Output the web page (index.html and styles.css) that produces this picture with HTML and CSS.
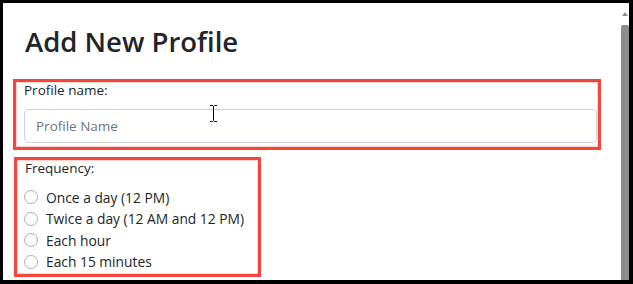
FILE: index.html
```html
<!DOCTYPE html>
<html lang="en">
<head>
    <meta charset="UTF-8">
    <meta name="viewport" content="width=device-width, initial-scale=1.0">
    <title>Add New Profile</title>
    <link rel="stylesheet" href="styles.css">
</head>
<body>
    <div class="window">
        <div class="page">
            <h2 class="title">Add New Profile</h2>

            <div class="field name-field">
                <label for="profile-name">Profile name:</label>
                <input type="text" id="profile-name" placeholder="Profile Name">
                <svg class="text-cursor" width="7" height="17" viewBox="0 0 7 17">
                    <path d="M0 .5h2.5l1 1 1-1H7M3.5 1.5v14M0 16.5h2.5l1-1 1 1H7" fill="none" stroke="#000" stroke-width="1"/>
                </svg>
            </div>

            <div class="field freq-field">
                <label>Frequency:</label>
                <div class="radios">
                    <label class="radio-row"><input type="radio" name="freq"> Once a day (12 PM)</label>
                    <label class="radio-row"><input type="radio" name="freq"> Twice a day (12 AM and 12 PM)</label>
                    <label class="radio-row"><input type="radio" name="freq"> Each hour</label>
                    <label class="radio-row"><input type="radio" name="freq"> Each 15 minutes</label>
                </div>
            </div>
        </div>

        <div class="scrollbar">
            <span class="scroll-arrow"></span>
            <span class="scroll-thumb"></span>
        </div>
    </div>
</body>
</html>
```

FILE: styles.css
```css
body {
    margin: 0;
    font-family: "Open Sans", "Noto Sans", Arial, sans-serif;
    color: #212529;
    background: #000;
}

.window {
    width: 633px;
    height: 284px;
    box-sizing: border-box;
    border: solid #000;
    border-width: 3px 4px 4px 3px;
    background: #fff;
    display: flex;
    overflow: hidden;
}

.page {
    flex: 1;
    padding: 22px 16px 0 10px;
}

.title {
    margin: 0 0 20px;
    padding-left: 12px;
    font-size: 27.5px;
    line-height: 34px;
    font-weight: 600;
    color: #212529;
}

.field {
    border: 3px solid #f4473c;
    box-shadow: inset 0 0 0 1px #fbd3cf;
    padding: 0 1px 0 8px;
    font-size: 13.5px;
}

.field > label {
    display: block;
    line-height: 16px;
}

.name-field {
    position: relative;
    padding-bottom: 4px;
}

.name-field input {
    display: block;
    width: 100%;
    box-sizing: border-box;
    height: 34px;
    margin-top: 11px;
    padding: 0 11px;
    border: 1px solid #ced4da;
    border-radius: 4px;
    font-family: inherit;
    font-size: 13.5px;
    color: #212529;
}

.name-field input::placeholder { color: #6c757d; }

.text-cursor {
    position: absolute;
    left: 194px;
    top: 23px;
}

.freq-field {
    width: 247px;
    box-sizing: border-box;
    margin: 7px 0 0 1px;
    padding-bottom: 1px;
}

.radios {
    margin-top: 10.5px;
}

.radio-row {
    display: flex;
    align-items: center;
    height: 21.5px;
    line-height: 21.5px;
    font-size: 13.8px;
}

.radio-row input {
    appearance: none;
    width: 14px;
    height: 14px;
    margin: 0 8px 0 -1px;
    border: 1px solid #a9aeb4;
    border-radius: 50%;
    background: #fff;
}

.scrollbar {
    width: 12px;
    padding: 9px 0 0 4px;
    box-sizing: border-box;
    display: flex;
    flex-direction: column;
}

.scroll-arrow {
    width: 0;
    height: 0;
    margin-left: 1px;
    border-left: 3px solid transparent;
    border-right: 3px solid transparent;
    border-bottom: 4px solid #8c8c8c;
}

.scroll-thumb {
    flex: 1;
    margin-top: 9px;
    background: #8d8d8d;
    border-radius: 2px 2px 0 0;
}
```
